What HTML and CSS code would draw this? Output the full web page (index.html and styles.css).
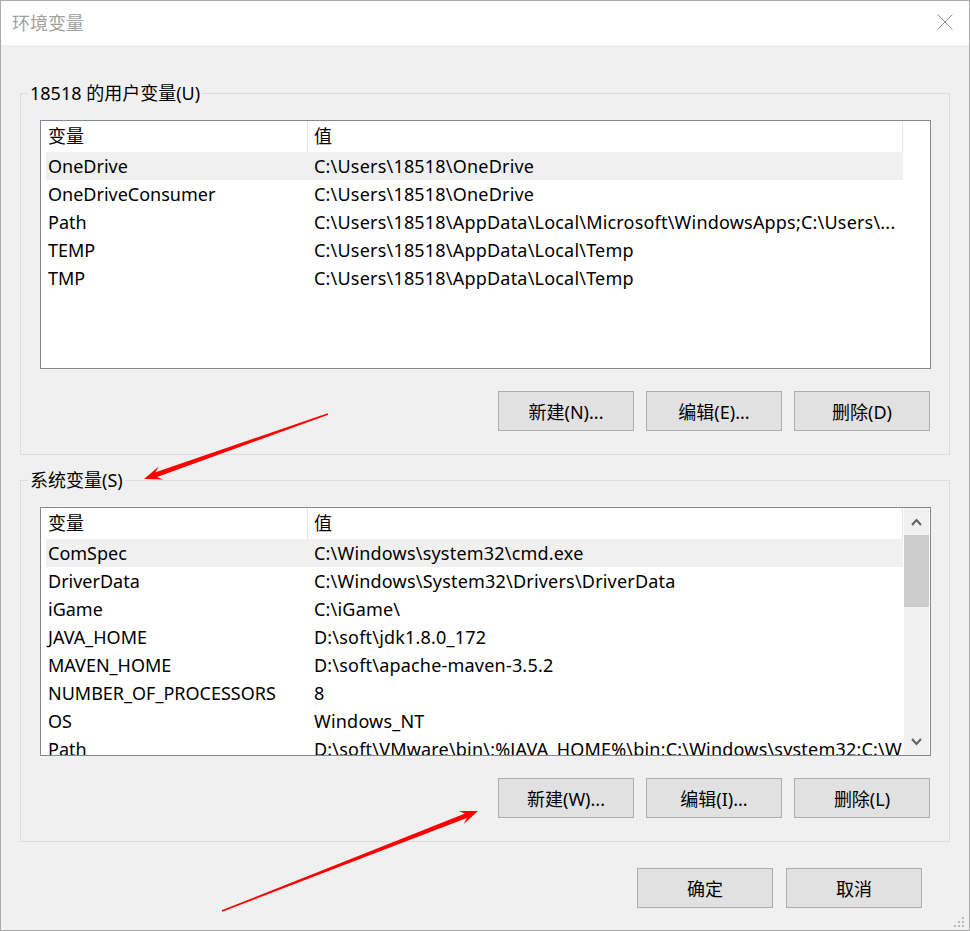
FILE: index.html
```html
<!DOCTYPE html>
<html lang="zh-CN">
<head>
<meta charset="utf-8">
<title>环境变量</title>
<link rel="stylesheet" href="styles.css">
</head>
<body>
<div class="window">
  <div class="titlebar">
    <span class="title">环境变量</span>
    <svg class="close" width="16" height="16" viewBox="0 0 16 16"><path d="M0.5 0.5 L15.5 15.5 M15.5 0.5 L0.5 15.5" stroke="#8a8a8a" stroke-width="1" fill="none"/></svg>
  </div>
  <div class="content">
    <fieldset class="group group-user">
      <legend>18518 的用户变量(U)</legend>
      <div class="list">
        <div class="list-main">
          <div class="list-head">
            <div class="hcell hname">变量</div>
            <div class="hcell hval">值</div>
          </div>
          <div class="row selected"><div class="cname">OneDrive</div><div class="cval">C:\Users\18518\OneDrive</div></div>
          <div class="row"><div class="cname">OneDriveConsumer</div><div class="cval">C:\Users\18518\OneDrive</div></div>
          <div class="row"><div class="cname">Path</div><div class="cval">C:\Users\18518\AppData\Local\Microsoft\WindowsApps;C:\Users\...</div></div>
          <div class="row"><div class="cname">TEMP</div><div class="cval">C:\Users\18518\AppData\Local\Temp</div></div>
          <div class="row"><div class="cname">TMP</div><div class="cval">C:\Users\18518\AppData\Local\Temp</div></div>
        </div>
        <div class="list-side"></div>
      </div>
      <div class="btns">
        <button class="btn">新建(N)...</button>
        <button class="btn">编辑(E)...</button>
        <button class="btn">删除(D)</button>
      </div>
    </fieldset>

    <fieldset class="group group-sys">
      <legend>系统变量(S)</legend>
      <div class="list">
        <div class="list-main">
          <div class="list-head">
            <div class="hcell hname">变量</div>
            <div class="hcell hval">值</div>
          </div>
          <div class="row selected"><div class="cname">ComSpec</div><div class="cval">C:\Windows\system32\cmd.exe</div></div>
          <div class="row"><div class="cname">DriverData</div><div class="cval">C:\Windows\System32\Drivers\DriverData</div></div>
          <div class="row"><div class="cname">iGame</div><div class="cval">C:\iGame\</div></div>
          <div class="row"><div class="cname">JAVA_HOME</div><div class="cval">D:\soft\jdk1.8.0_172</div></div>
          <div class="row"><div class="cname">MAVEN_HOME</div><div class="cval">D:\soft\apache-maven-3.5.2</div></div>
          <div class="row"><div class="cname">NUMBER_OF_PROCESSORS</div><div class="cval">8</div></div>
          <div class="row"><div class="cname">OS</div><div class="cval">Windows_NT</div></div>
          <div class="row"><div class="cname">Path</div><div class="cval">D:\soft\VMware\bin\;%JAVA_HOME%\bin;C:\Windows\system32;C:\Windows</div></div>
        </div>
        <div class="list-side">
          <div class="scrollbar">
            <div class="sb-btn"><svg width="11" height="8" viewBox="0 0 11 8"><polyline points="1,7 5.5,2 10,7" fill="none" stroke="#606060" stroke-width="2"/></svg></div>
            <div class="sb-track"><div class="sb-thumb"></div></div>
            <div class="sb-btn"><svg width="11" height="8" viewBox="0 0 11 8"><polyline points="1,1 5.5,6 10,1" fill="none" stroke="#606060" stroke-width="2"/></svg></div>
          </div>
        </div>
      </div>
      <div class="btns">
        <button class="btn">新建(W)...</button>
        <button class="btn">编辑(I)...</button>
        <button class="btn">删除(L)</button>
      </div>
    </fieldset>

    <div class="footer">
      <button class="btn">确定</button>
      <button class="btn">取消</button>
    </div>
  </div>

  <svg class="annot" width="970" height="931" viewBox="0 0 970 931">
    <polygon fill="#ff0000" points="327.7,413.2 155.5,472.3 158.7,466.4 144,479 163.3,479.6 157.1,477.0 328.3,414.8"/>
    <polygon fill="#ff0000" points="221.7,910.3 465.0,813.4 458.7,811.1 478,811 463.8,824.1 466.8,818.0 222.3,911.7"/>
  </svg>
  <svg class="grip" width="12" height="12" viewBox="0 0 12 12">
    <g fill="#b8b8b8">
      <rect x="8" y="0" width="2" height="2"/>
      <rect x="4" y="4" width="2" height="2"/><rect x="8" y="4" width="2" height="2"/>
      <rect x="0" y="8" width="2" height="2"/><rect x="4" y="8" width="2" height="2"/><rect x="8" y="8" width="2" height="2"/>
    </g>
  </svg>
</div>
</body>
</html>
```

FILE: styles.css
```css
* { box-sizing: border-box; }

body {
  margin: 0;
  background: #f0f0f0;
  font-family: "Noto Sans", "Noto Sans CJK SC", sans-serif;
  font-size: 18px;
  color: #000;
}

.window {
  position: relative;
  width: 970px;
  height: 931px;
  border: 1px solid #ababab;
  background: #f0f0f0;
  display: flex;
  flex-direction: column;
}

.titlebar {
  height: 44px;
  background: #fff;
  display: flex;
  align-items: center;
  justify-content: space-between;
  padding: 0 16px 0 11px;
  flex-shrink: 0;
}

.title {
  color: #a0a0a0;
  font-size: 18px;
  line-height: 24px;
}

.close { display: block; margin-top: -2px; }

.content {
  flex: 1;
  display: flex;
  flex-direction: column;
}

.group {
  margin: 0 19px;
  padding: 15px 18px 23px 19px;
  border: 1px solid #dcdcdc;
  min-width: 0;
}

.group-user { margin-top: 36px; }
.group-sys { margin-top: 13px; }

.group legend {
  margin-left: -12px;
  padding: 0 2px;
  font-size: 18px;
  line-height: 24px;
}

.list {
  height: 249px;
  border: 1px solid #828790;
  background: #fff;
  display: flex;
  overflow: hidden;
}

.list-main {
  width: 862px;
  flex-shrink: 0;
  overflow: hidden;
}

.list-side {
  flex: 1;
  padding: 0 1px 0 1px;
}

.list-head {
  display: flex;
  height: 31px;
}

.hcell {
  line-height: 31px;
  padding-left: 7px;
  border-right: 1px solid #e5e5e5;
}

.hname { width: 267px; }
.hval { width: 595px; padding-left: 6px; }

.row {
  display: flex;
  height: 28px;
  line-height: 28px;
  margin-left: 5px;
  white-space: nowrap;
}

.row.selected { background: #f0f0f0; }

.cname {
  width: 262px;
  flex-shrink: 0;
  padding-left: 2px;
}

.cval {
  flex: 1;
  padding-left: 6px;
  overflow: hidden;
  letter-spacing: 0.2px;
}

.scrollbar {
  height: 100%;
  background: #f0f0f0;
  display: flex;
  flex-direction: column;
}

.sb-btn {
  height: 27px;
  display: flex;
  align-items: center;
  justify-content: center;
  flex-shrink: 0;
}

.sb-btn svg { display: block; }

.sb-track { flex: 1; }

.sb-thumb {
  height: 72px;
  background: #cdcdcd;
}

.btns {
  display: flex;
  justify-content: flex-end;
  gap: 12px;
  margin-top: 22px;
  padding-right: 1px;
}

.btn {
  width: 136px;
  height: 40px;
  background: #e1e1e1;
  border: 1px solid #adadad;
  font-family: inherit;
  font-size: 18px;
  color: #000;
  padding: 0;
}

.footer {
  display: flex;
  justify-content: flex-end;
  gap: 13px;
  margin-top: 26px;
  padding-right: 47px;
}

.annot {
  position: absolute;
  left: -1px;
  top: -1px;
  pointer-events: none;
}

.grip {
  position: absolute;
  right: 3px;
  bottom: 1px;
}
```
